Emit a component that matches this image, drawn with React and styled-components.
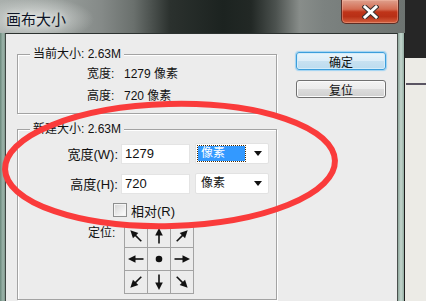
import styled, { createGlobalStyle } from "styled-components";

const GlobalStyle = createGlobalStyle`
  html, body {
    margin: 0;
    padding: 0;
    background: #ecebe6;
  }
  body {
    font-family: "Liberation Sans", "Noto Sans CJK SC", sans-serif;
    font-size: 12px;
    color: #111;
  }
`;

const ARROWS = [-45, 0, 45, -90, null, 90, -135, 180, 135];

export default function App() {
  return (
    <>
      <GlobalStyle />
      <Screen>
        <Window>
          <TitleBar>
            <Title>画布大小</Title>
            <CloseButton>
              <svg width="17" height="14" viewBox="0 0 17 14">
                <path d="M3 2 L14 12 M14 2 L3 12" stroke="#3b3230" strokeWidth="5" strokeLinecap="square" />
                <path d="M3 2 L14 12 M14 2 L3 12" stroke="#fff" strokeWidth="3" strokeLinecap="square" />
              </svg>
            </CloseButton>
          </TitleBar>
          <Body>
            <LeftFrame />
            <Client>
              <Groups>
                <Group $top={20} $height={60}>
                  <Legend>当前大小: 2.63M</Legend>
                  <InfoList>
                    <InfoRow>
                      <InfoLabel>宽度:</InfoLabel>1279 像素
                    </InfoRow>
                    <InfoRow>
                      <InfoLabel>高度:</InfoLabel>720 像素
                    </InfoRow>
                  </InfoList>
                </Group>
                <Group $top={15} $height={171}>
                  <Legend>新建大小: 2.63M</Legend>
                  <FormList>
                    <FieldRow>
                      <FieldLabel>宽度(W):</FieldLabel>
                      <TextBox>1279</TextBox>
                      <Select>
                        <SelectValue $active>像素</SelectValue>
                        <Caret />
                      </Select>
                    </FieldRow>
                    <FieldRow>
                      <FieldLabel>高度(H):</FieldLabel>
                      <TextBox>720</TextBox>
                      <Select>
                        <SelectValue>像素</SelectValue>
                        <Caret />
                      </Select>
                    </FieldRow>
                    <CheckRow>
                      <CheckBox />
                      <span>相对(R)</span>
                    </CheckRow>
                    <AnchorRow>
                      <AnchorLabel>定位:</AnchorLabel>
                      <AnchorGrid>
                        {ARROWS.map((deg, i) => (
                          <AnchorCell key={i}>
                            {deg === null ? (
                              <svg width="22" height="22" viewBox="0 0 22 22">
                                <circle cx="11" cy="11" r="3.3" fill="#111" />
                              </svg>
                            ) : (
                              <svg width="22" height="22" viewBox="0 0 22 22">
                                <g transform={`rotate(${deg} 11 11)`}>
                                  <line x1="11" y1="18.5" x2="11" y2="8" stroke="#111" strokeWidth="1.6" />
                                  <polygon points="11,3 7.2,10.5 14.8,10.5" fill="#111" />
                                </g>
                              </svg>
                            )}
                          </AnchorCell>
                        ))}
                      </AnchorGrid>
                    </AnchorRow>
                  </FormList>
                </Group>
              </Groups>
              <Buttons>
                <Button $primary>确定</Button>
                <Button>复位</Button>
              </Buttons>
            </Client>
            <RightFrame />
          </Body>
        </Window>
        <Outside>
          <DarkPane />
          <LightPane>
            <Rule />
          </LightPane>
        </Outside>
        <Mark width="426" height="301" viewBox="0 0 426 301">
          <ellipse
            cx="170"
            cy="165"
            rx="165"
            ry="61"
            transform="rotate(-1.5 170 165)"
            fill="none"
            stroke="#fa3b3b"
            strokeWidth="6"
          />
        </Mark>
      </Screen>
    </>
  );
}

const Screen = styled.div`
  position: relative;
  display: flex;
  width: 426px;
  height: 301px;
  overflow: hidden;
`;

const Window = styled.div`
  display: flex;
  flex-direction: column;
  width: 405px;
  flex: none;
`;

const TitleBar = styled.div`
  height: 33px;
  display: flex;
  align-items: flex-start;
  background:
    radial-gradient(ellipse 58px 22px at 36px 19px, rgba(222, 225, 223, 0.95), rgba(222, 225, 223, 0)),
    linear-gradient(
      90deg,
      #aab0ad 0%,
      #999f9c 14%,
      #858a88 25%,
      #6a706d 33%,
      #2b312e 42%,
      #1c2320 55%,
      #222825 62%,
      #4b514e 68%,
      #888d8a 74%,
      #7c8280 80%,
      #6d7370 100%
    );
`;

const Title = styled.div`
  margin: 11px 0 0 6px;
  font-family: "Noto Sans CJK SC", sans-serif;
  font-size: 15px;
  line-height: 16px;
  color: #0e1526;
  text-shadow: 0 0 6px rgba(255, 255, 255, 0.8);
`;

const CloseButton = styled.div`
  margin-left: auto;
  margin-right: 6px;
  width: 58px;
  height: 24px;
  box-sizing: border-box;
  display: flex;
  align-items: center;
  justify-content: center;
  border: 1px solid #5c2d24;
  border-top: none;
  border-radius: 0 0 5px 5px;
  background: linear-gradient(
    180deg,
    #dfa08d 0%,
    #d36c52 40%,
    #bf3419 52%,
    #b83016 72%,
    #d4603f 100%
  );
  box-shadow: inset 0 0 0 1px rgba(255, 200, 180, 0.35);
`;

const Body = styled.div`
  flex: 1;
  display: flex;
`;

const LeftFrame = styled.div`
  width: 5px;
  background: linear-gradient(90deg, #6a887c, #9db5ab 60%, #7f978c);
`;

const RightFrame = styled.div`
  width: 7px;
  box-sizing: border-box;
  border-right: 1px solid #1e1e1e;
  background: linear-gradient(90deg, #8ea79c, #c4d6ce 50%, #94ada2);
`;

const Client = styled.div`
  flex: 1;
  display: flex;
  align-items: flex-start;
  padding-left: 11px;
  background: #ececec;
  border-top: 1px solid #2c3230;
  border-left: 1px solid #3f4643;
  border-right: 1px solid #4a504d;
`;

const Groups = styled.div`
  width: 260px;
  display: flex;
  flex-direction: column;
`;

const Group = styled.div`
  position: relative;
  box-sizing: border-box;
  margin-top: ${p => p.$top}px;
  height: ${p => p.$height}px;
  border: 1px solid #a3a3a3;
  box-shadow: inset 1px 1px 0 #fff, 1px 1px 0 #fff;
`;

const Legend = styled.span`
  position: absolute;
  top: -8px;
  left: 12px;
  padding: 0 3px;
  line-height: 15px;
  background: #ececec;
`;

const InfoList = styled.div`
  padding: 8px 0 0 69px;
`;

const InfoRow = styled.div`
  display: flex;
  line-height: 22px;
`;

const InfoLabel = styled.span`
  width: 37px;
`;

const FormList = styled.div`
  display: flex;
  flex-direction: column;
  padding-top: 13px;
`;

const FieldRow = styled.div`
  display: flex;
  align-items: center;
  height: 21px;
  margin-bottom: 9px;
`;

const FieldLabel = styled.span`
  width: 100px;
  text-align: right;
  font-size: 13px;
`;

const TextBox = styled.div`
  margin-left: 3px;
  width: 69px;
  height: 20px;
  box-sizing: border-box;
  padding-left: 3px;
  line-height: 18px;
  font-size: 13px;
  background: #fff;
  border: 1px solid #e4e4e4;
`;

const Select = styled.div`
  margin-left: 5px;
  width: 74px;
  height: 21px;
  box-sizing: border-box;
  display: flex;
  align-items: center;
  padding-left: 2px;
  background: #fff;
  border: 1px solid #e2e2e2;
  border-radius: 2px;
`;

const SelectValue = styled.span`
  width: 47px;
  height: 15px;
  box-sizing: border-box;
  padding-left: 3px;
  line-height: 15px;
  color: ${p => (p.$active ? "#fff" : "#111")};
  background: ${p => (p.$active ? "#3399ff" : "transparent")};
  outline: ${p => (p.$active ? "1px dotted #4a2a00" : "none")};
`;

const Caret = styled.span`
  margin-left: auto;
  margin-right: 6px;
  width: 0;
  height: 0;
  border-left: 4px solid transparent;
  border-right: 4px solid transparent;
  border-top: 5px solid #111;
`;

const CheckRow = styled.div`
  display: flex;
  align-items: center;
  gap: 4px;
  height: 16px;
  margin-top: -1px;
  padding-left: 95px;
  font-size: 13px;
`;

const CheckBox = styled.span`
  width: 14px;
  height: 14px;
  box-sizing: border-box;
  border: 1px solid #8e8f8f;
  background: linear-gradient(135deg, #d3d3d3, #f7f7f7 80%);
  box-shadow: inset 0 0 0 1px #f4f4f4;
`;

const AnchorRow = styled.div`
  display: flex;
  align-items: flex-start;
  margin-top: 6px;
  padding-left: 70px;
`;

const AnchorLabel = styled.span`
  width: 36px;
  margin-top: 2px;
  line-height: 15px;
`;

const AnchorGrid = styled.div`
  display: grid;
  grid-template-columns: repeat(3, 22px);
  grid-auto-rows: 22px;
  gap: 1px;
  border: 1px solid #a3a3a3;
  background: #a3a3a3;
`;

const AnchorCell = styled.div`
  display: flex;
  align-items: center;
  justify-content: center;
  background: #ececec;
`;

const Buttons = styled.div`
  display: flex;
  flex-direction: column;
  gap: 10px;
  margin-left: 19px;
  padding-top: 18px;
`;

const Button = styled.div`
  width: 90px;
  height: 18px;
  box-sizing: border-box;
  display: flex;
  align-items: center;
  justify-content: center;
  font-size: 12px;
  border-radius: 3px;
  border: 1px solid ${p => (p.$primary ? "#3c9edb" : "#707070")};
  background: ${p =>
    p.$primary
      ? "linear-gradient(180deg, #eaf5fb 0%, #dcedf8 50%, #c7e1f1 51%, #bcdcef 100%)"
      : "linear-gradient(180deg, #f3f3f3 0%, #ebebeb 50%, #dcdcdc 51%, #d0d0d0 100%)"};
  box-shadow: ${p => (p.$primary ? "0 0 1px 1px #9fd3f3, inset 0 0 0 1px #d4ecfa" : "inset 0 0 0 1px #fbfbfb")};
`;

const Outside = styled.div`
  flex: 1;
  display: flex;
  flex-direction: column;
`;

const DarkPane = styled.div`
  height: 58px;
  background: #262626;
`;

const LightPane = styled.div`
  flex: 1;
  padding-top: 25px;
  background: #ecebe6;
`;

const Rule = styled.div`
  height: 2px;
  margin-left: 1px;
  background: #5a5462;
`;

const Mark = styled.svg`
  position: absolute;
  left: 0;
  top: 0;
  pointer-events: none;
`;
